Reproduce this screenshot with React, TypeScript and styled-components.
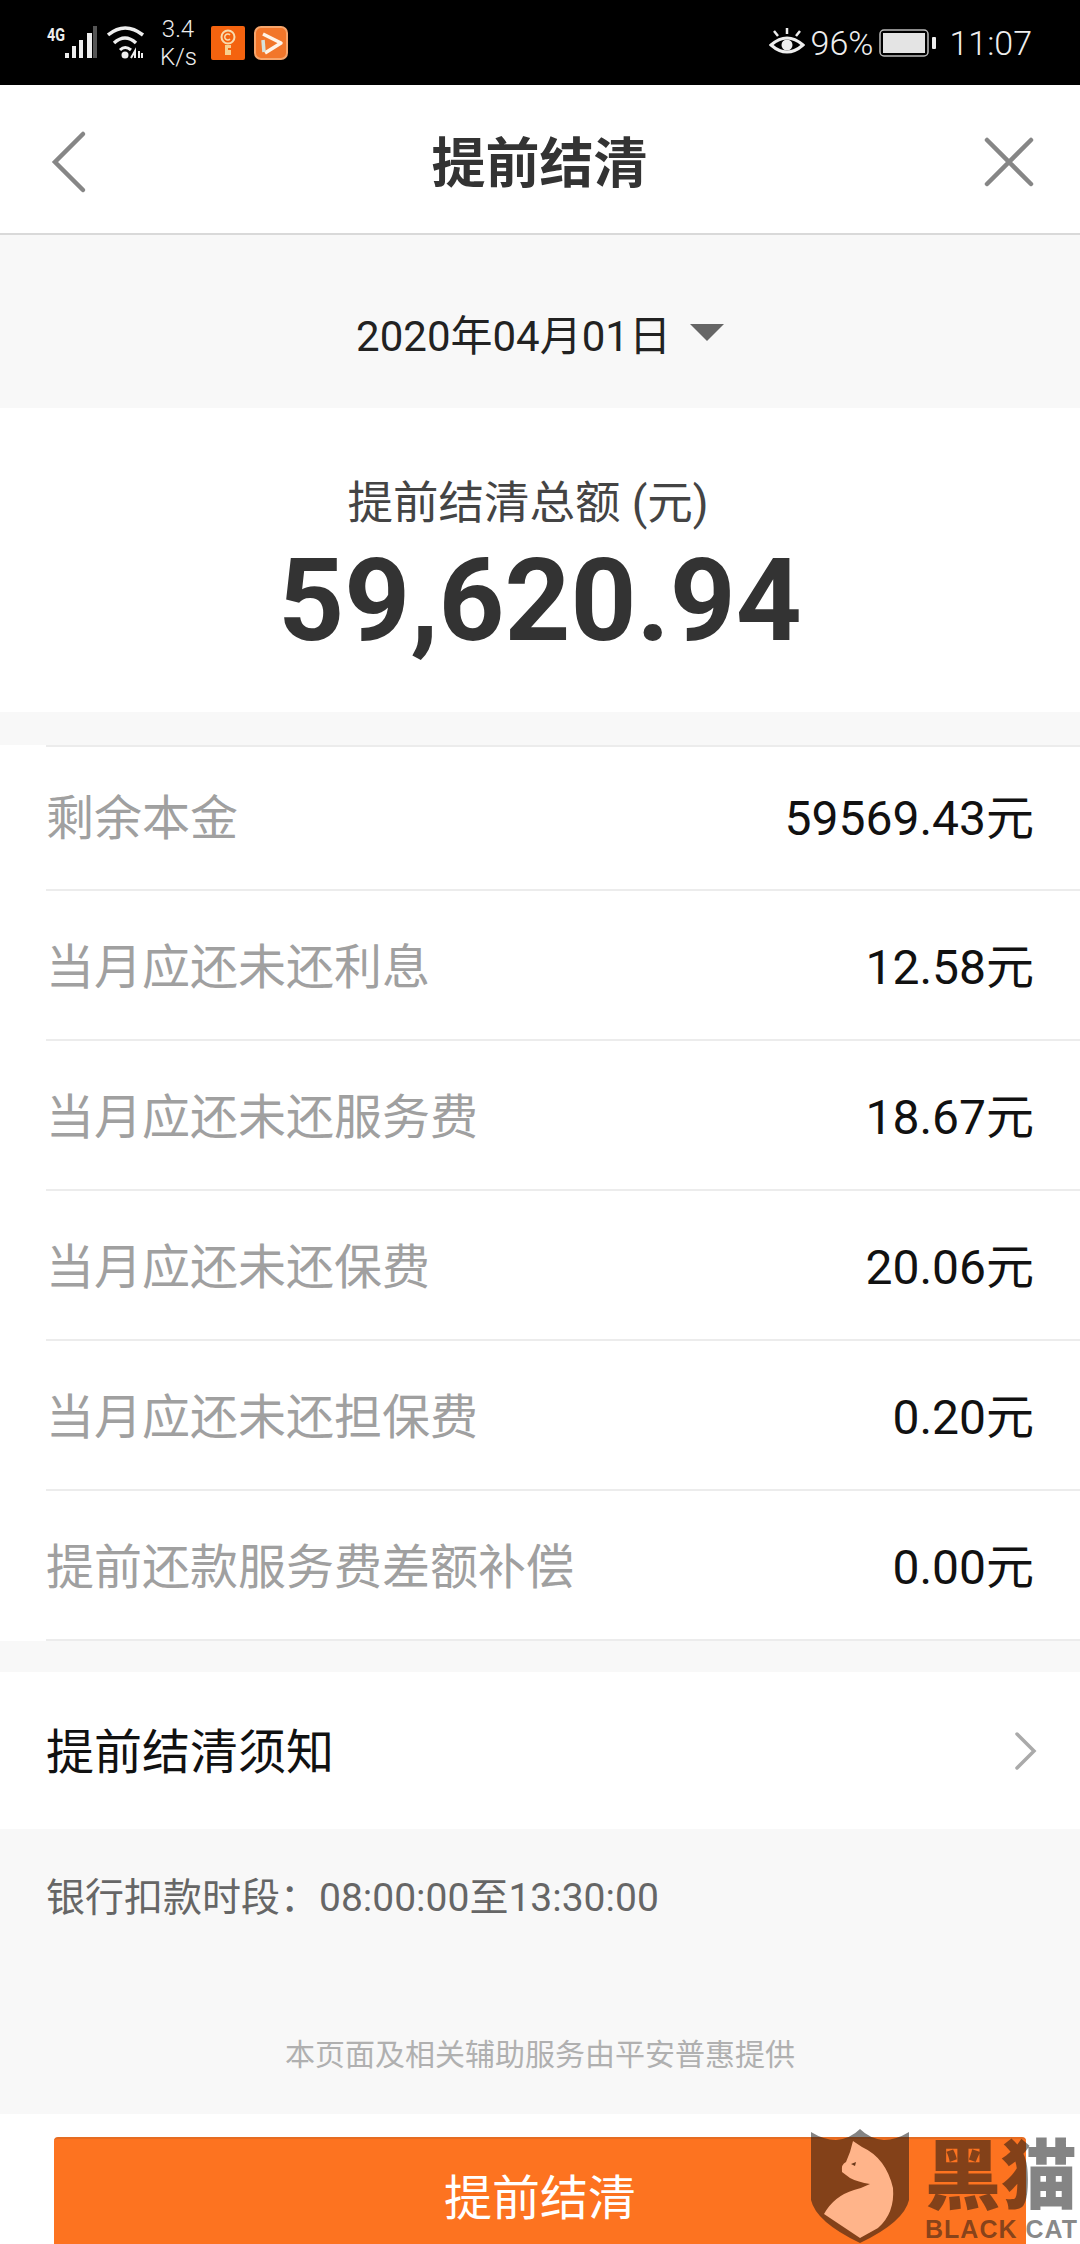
import styled, { createGlobalStyle } from "styled-components"

const CJK = `"Roboto", "Noto Sans CJK SC", sans-serif`

const GlobalStyle = createGlobalStyle`
  html, body {
    margin: 0;
    padding: 0;
    background: #f8f8f8;
    font-family: ${CJK};
  }
`

const Page = styled.div`
  width: 1080px;
  height: 2244px;
  overflow: hidden;
  display: flex;
  flex-direction: column;
  position: relative;
  background: #f8f8f8;
`

const StatusBar = styled.div`
  height: 85px;
  flex-shrink: 0;
  background: #000;
  color: #eee;
  display: flex;
  align-items: center;
  justify-content: space-between;
  padding: 0 48px 0 46px;
`

const StatusGroup = styled.div`
  display: flex;
  align-items: center;
`

const Speed = styled.div`
  width: 36px;
  font-size: 24px;
  line-height: 28px;
  font-weight: 300;
  text-align: center;
  margin: 0 15px;
  white-space: nowrap;
`

const AppIcon = styled.div<{ $bg: string; $radius: number; $edge: string }>`
  width: 34px;
  height: 34px;
  margin-right: 9px;
  box-sizing: border-box;
  background: ${(p) => p.$bg};
  border: 2px solid ${(p) => p.$edge};
  border-radius: ${(p) => p.$radius}px;
  display: flex;
  align-items: center;
  justify-content: center;
`

const StatusText = styled.span<{ $left: number }>`
  font-size: 34px;
  font-weight: 300;
  margin-left: ${(p) => p.$left}px;
`

const BatterySvg = styled.svg`
  margin-left: 6px;
`

const NavBar = styled.div`
  height: 150px;
  flex-shrink: 0;
  background: #fff;
  border-bottom: 2px solid #d9d9d9;
  box-sizing: border-box;
  display: flex;
  align-items: center;
  justify-content: space-between;
  padding: 5px 46px 0 50px;
`

const NavTitle = styled.div`
  font-size: 54px;
  font-weight: 700;
  color: #333;
  margin: -5px 0 0 5px;
`

const DateStrip = styled.div`
  height: 173px;
  flex-shrink: 0;
  display: flex;
  align-items: center;
  justify-content: center;
  font-size: 42px;
  color: #222;
  gap: 19px;
  box-sizing: border-box;
  padding-top: 22px;
`

const Caret = styled.div`
  width: 0;
  height: 0;
  border-left: 17px solid transparent;
  border-right: 17px solid transparent;
  border-top: 17px solid #666;
`

const Summary = styled.div`
  height: 304px;
  flex-shrink: 0;
  background: #fff;
  display: flex;
  flex-direction: column;
  align-items: center;
  box-sizing: border-box;
  padding-top: 68px;
`

const SummaryLabel = styled.div`
  font-size: 45.5px;
  line-height: 56px;
  color: #444;
  padding-right: 24px;
`

const SummaryAmount = styled.div`
  margin-top: 19px;
  font-size: 115px;
  line-height: 100px;
  font-weight: 700;
  color: #333;
`

const List = styled.div`
  margin-top: 33px;
  height: 896px;
  flex-shrink: 0;
  background: #fff;
  padding: 0 0 0 46px;
  display: flex;
  flex-direction: column;
`

const Row = styled.div`
  flex: 1;
  display: flex;
  align-items: center;
  justify-content: space-between;
  box-sizing: border-box;
  padding: 0 46px 4px 0;
  border-bottom: 2px solid #ececec;

  &:first-child {
    flex: none;
    height: 146px;
    padding-bottom: 8px;
    border-top: 2px solid #ececec;
  }
`

const RowLabel = styled.span`
  font-size: 48px;
  color: #a0a0a0;
`

const RowValue = styled.span`
  font-size: 48px;
  color: #111;
`

const NoticeRow = styled.div`
  margin-top: 31px;
  height: 157px;
  flex-shrink: 0;
  background: #fff;
  display: flex;
  align-items: center;
  justify-content: space-between;
  padding: 0 42px 0 46px;
`

const NoticeText = styled.span`
  font-size: 48px;
  color: #111;
  margin-bottom: 6px;
`

const InfoBlock = styled.div`
  height: 285px;
  flex-shrink: 0;
  display: flex;
  flex-direction: column;
  padding: 41px 46px 0;
  box-sizing: border-box;
`

const BankTime = styled.div`
  font-size: 39px;
  line-height: 56px;
  color: #666;
`

const Provider = styled.div`
  margin-top: 109px;
  font-size: 30px;
  line-height: 40px;
  color: #b0b0b0;
  text-align: center;
`

const Footer = styled.div`
  flex: 1;
  background: #fff;
  padding: 23px 54px 0;
`

const PayButton = styled.div`
  height: 118px;
  background: #fd7320;
  border-top: 2px solid #e56c22;
  border-radius: 4px;
  color: #fff;
  font-size: 48px;
  display: flex;
  align-items: center;
  justify-content: center;
  box-sizing: border-box;
  padding-bottom: 6px;
`

const Watermark = styled.div`
  position: absolute;
  left: 810px;
  top: 2128px;
  width: 270px;
  height: 116px;
  display: flex;
`

const ShieldSvg = styled.svg`
  flex-shrink: 0;
`

const MarkText = styled.div`
  margin-left: 15px;
  display: flex;
  flex-direction: column;
  color: rgba(20, 20, 20, 0.52);
`

const MarkHan = styled.div`
  font-size: 76px;
  line-height: 78px;
  font-weight: 900;
  padding-top: 10px;
  white-space: nowrap;
`

const MarkLatin = styled.div`
  font-family: "Liberation Sans", sans-serif;
  font-size: 25px;
  line-height: 26px;
  font-weight: 700;
  letter-spacing: 1px;
  white-space: nowrap;
`

const WifiSvg = styled.svg`
  margin-left: 9px;
`

const rows = [
  ["剩余本金", "59569.43元"],
  ["当月应还未还利息", "12.58元"],
  ["当月应还未还服务费", "18.67元"],
  ["当月应还未还保费", "20.06元"],
  ["当月应还未还担保费", "0.20元"],
  ["提前还款服务费差额补偿", "0.00元"],
]

export default function App() {
  return (
    <Page>
      <GlobalStyle />
      <StatusBar>
        <StatusGroup>
          <svg width="52" height="36" viewBox="0 0 52 36">
            <text x="1" y="16" fontSize="18" fontWeight="700" fill="#eee" fontFamily="Roboto" textLength="18" lengthAdjust="spacingAndGlyphs">4G</text>
            <rect x="19" y="28" width="4" height="5" fill="#eee" />
            <rect x="26" y="21" width="4" height="12" fill="#eee" />
            <rect x="33" y="15" width="4" height="18" fill="#eee" />
            <rect x="41" y="8" width="5" height="25" fill="#eee" />
            <rect x="47" y="1" width="4" height="32" fill="#555" />
          </svg>
          <WifiSvg width="38" height="36" viewBox="0 0 38 36">
            <path d="M1 10 Q18 -4 36 10" fill="none" stroke="#eee" strokeWidth="3.5" />
            <path d="M7 18 Q18 8 29 18" fill="none" stroke="#eee" strokeWidth="3.5" />
            <path d="M13 25 Q18 20 24 25" fill="none" stroke="#eee" strokeWidth="3" />
            <circle cx="18" cy="30" r="3.5" fill="#eee" />
            <path d="M24 33 L28 26 V33 M32 26 V33 M35 28 V33" fill="none" stroke="#eee" strokeWidth="2" />
          </WifiSvg>
          <Speed>
            3.4
            <br />
            K/s
          </Speed>
          <AppIcon $bg="#f4630f" $radius={2} $edge="#f4630f">
            <svg width="18" height="28" viewBox="0 0 18 28">
              <circle cx="9" cy="8" r="6.5" fill="none" stroke="#f8dcae" strokeWidth="2" />
              <path d="M11 6 A3 3 0 1 0 11 10" fill="none" stroke="#f8dcae" strokeWidth="1.5" />
              <path d="M6 16 H12 V19 H9 V21 H12 V26 H6 Z" fill="#f8d08f" />
            </svg>
          </AppIcon>
          <AppIcon $bg="#f2762a" $radius={7} $edge="#f7a56b">
            <svg width="28" height="28" viewBox="0 0 28 28">
              <path d="M6 5 L24 14 L8 24" fill="none" stroke="#fff4e8" strokeWidth="3.5" strokeLinejoin="round" />
              <path d="M6 11 L7 23" fill="none" stroke="#d6e2dc" strokeWidth="3.5" />
            </svg>
          </AppIcon>
        </StatusGroup>
        <StatusGroup>
          <svg width="36" height="30" viewBox="0 0 36 30">
            <path d="M2 17 Q18 3 34 17 Q18 31 2 17 Z" fill="none" stroke="#eee" strokeWidth="3" />
            <circle cx="18" cy="17" r="5.5" fill="#eee" />
            <path d="M18 0 V6 M5 3 L9 8 M31 3 L27 8" stroke="#eee" strokeWidth="2.5" />
          </svg>
          <StatusText $left={6}>96%</StatusText>
          <BatterySvg width="58" height="28" viewBox="0 0 58 28">
            <rect x="1" y="1" width="48" height="26" rx="4" fill="none" stroke="#bbb" strokeWidth="1.5" />
            <rect x="4" y="4" width="42" height="20" fill="#e4e4e4" />
            <rect x="53" y="8" width="4" height="12" rx="1" fill="#eee" />
          </BatterySvg>
          <StatusText $left={12}>11:07</StatusText>
        </StatusGroup>
      </StatusBar>

      <NavBar>
        <svg width="40" height="64" viewBox="0 0 40 64">
          <path d="M33 4 L5 32 L33 60" fill="none" stroke="#868686" strokeWidth="4.5" strokeLinecap="round" />
        </svg>
        <NavTitle>提前结清</NavTitle>
        <svg width="50" height="50" viewBox="0 0 50 50">
          <path d="M3 3 L47 47 M47 3 L3 47" fill="none" stroke="#868686" strokeWidth="4.5" strokeLinecap="round" />
        </svg>
      </NavBar>

      <DateStrip>
        <span>2020年04月01日</span>
        <Caret />
      </DateStrip>

      <Summary>
        <SummaryLabel>提前结清总额 (元)</SummaryLabel>
        <SummaryAmount>59,620.94</SummaryAmount>
      </Summary>

      <List>
        {rows.map(([label, value]) => (
          <Row key={label}>
            <RowLabel>{label}</RowLabel>
            <RowValue>{value}</RowValue>
          </Row>
        ))}
      </List>

      <NoticeRow>
        <NoticeText>提前结清须知</NoticeText>
        <svg width="24" height="42" viewBox="0 0 24 42">
          <path d="M3 4 L20 21 L3 38" fill="none" stroke="#aaa" strokeWidth="3.5" strokeLinecap="round" />
        </svg>
      </NoticeRow>

      <InfoBlock>
        <BankTime>银行扣款时段：08:00:00至13:30:00</BankTime>
        <Provider>本页面及相关辅助服务由平安普惠提供</Provider>
      </InfoBlock>

      <Footer>
        <PayButton>提前结清</PayButton>
      </Footer>

      <Watermark>
        <ShieldSvg width="100" height="116" viewBox="0 0 100 116">
          <path d="M1 4 Q14 12 26 12 Q40 11 50 1 Q60 11 74 12 Q86 12 99 4 V72 Q94 94 50 115 Q6 94 1 72 Z" fill="rgba(20,20,20,0.52)" />
          <path d="M40 24 L43 13 L52 19 Q76 30 83 60 Q85 85 68 100 L50 110 L14 86 Q24 68 44 62 Q52 60 60 56 Q48 54 40 50 L32 44 Q31 36 36 34 Z" fill="#ffb48a" />
          <path d="M41 36 L46 34 L45 38 Z" fill="#6b3a1c" />
        </ShieldSvg>
        <MarkText>
          <MarkHan>黑猫</MarkHan>
          <MarkLatin>BLACK CAT</MarkLatin>
        </MarkText>
      </Watermark>
    </Page>
  )
}
